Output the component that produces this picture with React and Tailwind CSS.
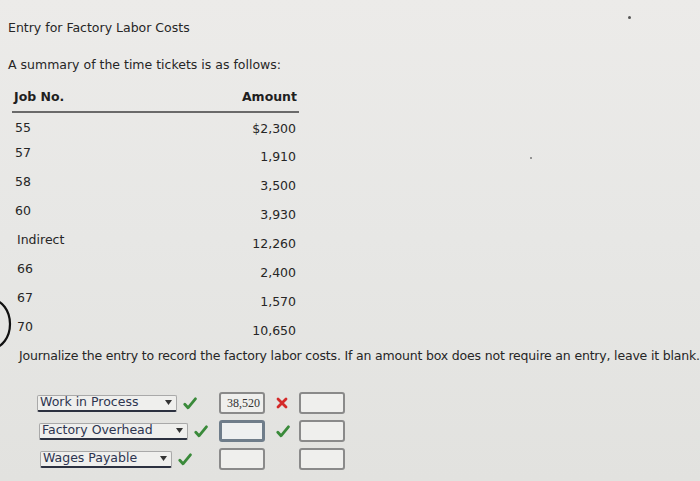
import React from "react";

const rows = [
  ["55", "$2,300"],
  ["57", "1,910"],
  ["58", "3,500"],
  ["60", "3,930"],
  ["Indirect", "12,260"],
  ["66", "2,400"],
  ["67", "1,570"],
  ["70", "10,650"],
];

function Check() {
  return (
    <svg width="14" height="13" viewBox="0 0 14 13" className="shrink-0">
      <path d="M1.8 7.2 L5 10.8 L12.4 1.8" fill="none" stroke="#3a8a3a" strokeWidth="2.8" strokeLinecap="round" strokeLinejoin="round" />
    </svg>
  );
}

function Cross() {
  return (
    <svg width="12" height="12" viewBox="0 0 12 12" className="shrink-0">
      <path d="M2 2 L10 10 M10 2 L2 10" fill="none" stroke="#d42a2a" strokeWidth="2.8" strokeLinecap="round" />
    </svg>
  );
}

function Select({ label, w }) {
  return (
    <div
      className="h-[17px] flex items-center justify-between bg-[#efefed] border border-[#a9a9a9] border-b-2 border-b-[#2c3140] rounded-[2px] pl-[2px] pr-[4px]"
      style={{ width: w }}
    >
      <span className="text-[12.5px] leading-none text-[#2d3550]">{label}</span>
      <svg width="7" height="5" viewBox="0 0 7 5">
        <path d="M0 0 L7 0 L3.5 5 Z" fill="#333" />
      </svg>
    </div>
  );
}

function Box({ value, focus }) {
  return (
    <div
      className={
        "w-[46px] h-[22px] rounded-[3px] flex items-center justify-end pr-[3px] " +
        (focus
          ? "border-[3px] border-[#6f7d8a] bg-[#eef0f0]"
          : "border-2 border-[#8a8a8a] bg-[#efefed]")
      }
    >
      {value && (
        <span className="text-[12px] text-[#333]" style={{ fontFamily: '"Liberation Serif", serif' }}>
          {value}
        </span>
      )}
    </div>
  );
}

export default function App() {
  return (
    <div
      className="w-[700px] h-[481px] overflow-hidden relative text-[#262626] bg-gradient-to-b from-[#ecebe9] via-[#e7e7e5] to-[#e2e2df]"
      style={{ fontFamily: '"DejaVu Sans", Verdana, sans-serif' }}
    >
      {/* left arc */}
      <svg width="12" height="52" viewBox="0 0 12 52" className="absolute left-0 top-[298px]">
        <path d="M-8 2 A 18 24 0 0 1 -8 50" fill="none" stroke="#111" strokeWidth="2.2" />
      </svg>
      <div className="absolute left-[628px] top-[16px] w-[3px] h-[3px] rounded-full bg-[#555]" />
      <div className="absolute left-[530px] top-[157px] w-[2px] h-[2px] rounded-full bg-[#777]" />

      <div className="pl-[8px] pt-[19px] flex flex-col">
        <div className="text-[12.5px] leading-[17px]">Entry for Factory Labor Costs</div>
        <div className="mt-[20px] text-[12.5px] leading-[17px]">
          A summary of the time tickets is as follows:
        </div>

        <div className="mt-[15px] ml-[4px] w-[287px] flex flex-col">
          <div className="flex justify-between pl-[2px] pr-[2px] text-[12.5px] font-bold leading-[17px] text-[#1f1f1f]">
            <span>Job No.</span>
            <span>Amount</span>
          </div>
          <div className="mt-[6px] h-[2px] bg-[#6a6a6a]" />
          <div className="mt-[2px] flex flex-col">
            {rows.map(([a, b], i) => (
              <div key={i} className="h-[29px] flex justify-between pl-[3px] pr-[3px] text-[12.5px] leading-[17px]">
                <span className={(i === 0 ? "pt-[4px] " : "") + (i >= 4 ? "pl-[2px]" : "")}>{a}</span>
                <span className={i === 0 ? "pt-[5px]" : "pt-[4px]"}>{b}</span>
              </div>
            ))}
          </div>
        </div>

        <div className="ml-[11px] text-[12.5px] leading-[17px] tracking-[-0.18px] whitespace-nowrap">
          Journalize the entry to record the factory labor costs. If an amount box does not require an entry, leave it blank.
        </div>

        <div className="mt-[28px] ml-[29px] grid grid-cols-[182px_57px_23px_47px] gap-y-[6px] items-center">
          <div className="flex items-center gap-[6px]">
            <Select label="Work in Process" w={140} />
            <Check />
          </div>
          <Box value="38,520" />
          <div><Cross /></div>
          <Box />

          <div className="flex items-center gap-[6px] pl-[2px]">
            <Select label="Factory Overhead" w={149} />
            <Check />
          </div>
          <Box focus />
          <div><Check /></div>
          <Box />

          <div className="flex items-center gap-[6px] pl-[3px]">
            <Select label="Wages Payable" w={132} />
            <Check />
          </div>
          <Box />
          <div />
          <Box />
        </div>
      </div>
    </div>
  );
}
